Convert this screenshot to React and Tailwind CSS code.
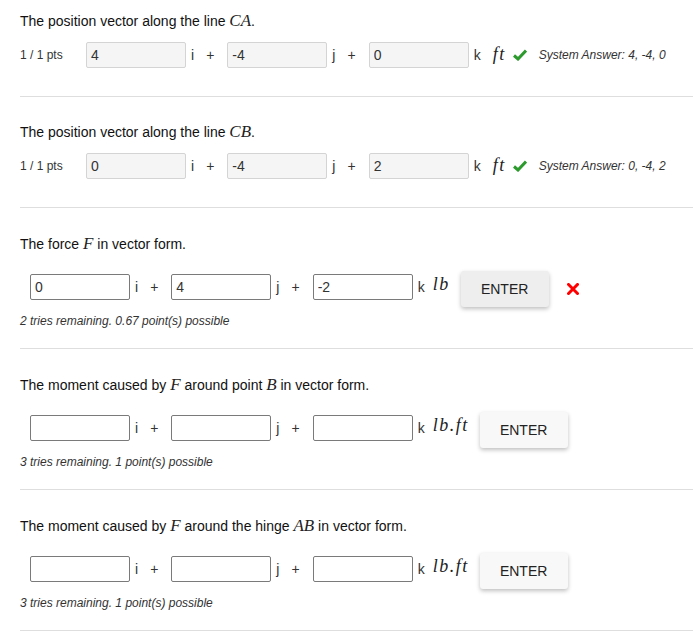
import React from 'react';

const mathFont = { fontFamily: '"Liberation Serif", "DejaVu Serif", serif' };

function M({ children, size }) {
  return (
    <span className={`italic ${size || 'text-[17px]'} text-[#222] leading-none`} style={mathFont}>
      {children}
    </span>
  );
}

function Check() {
  return (
    <svg width="14" height="12" viewBox="0 0 14 12" className="ml-[7px] shrink-0">
      <path d="M1 6.5 L5 10 L13 1.5" fill="none" stroke="#2c9a2c" strokeWidth="3" strokeLinejoin="miter" />
    </svg>
  );
}

function Cross() {
  return (
    <svg width="12" height="12" viewBox="0 0 12 12" className="ml-[18px] mt-[12px] shrink-0">
      <path d="M1.5 1.5 L10.5 10.5 M10.5 1.5 L1.5 10.5" stroke="#ff0000" strokeWidth="3" strokeLinecap="square" />
    </svg>
  );
}

function Box({ value, done }) {
  return (
    <input
      type="text"
      readOnly
      value={value}
      className={
        done
          ? 'w-[100px] h-[26px] px-[4px] text-[14px] text-[#333] bg-[#f5f5f5] border border-[#d4d4d4] rounded-[2px] outline-none'
          : 'w-[100px] h-[26px] px-[4px] text-[14px] text-[#333] bg-white border border-[#7a7a7a] rounded-[2px] outline-none'
      }
    />
  );
}

function Vector({ values, done }) {
  return (
    <>
      <Box value={values[0]} done={done} />
      <span className="ml-[5px]">i</span>
      <span className="ml-[12px]">+</span>
      <span className="ml-[13px]"><Box value={values[1]} done={done} /></span>
      <span className="ml-[5px]">j</span>
      <span className="ml-[12px]">+</span>
      <span className="ml-[13px]"><Box value={values[2]} done={done} /></span>
      <span className="ml-[5px]">k</span>
    </>
  );
}

function Answered({ title, values, answer, first }) {
  return (
    <div className={`border-b border-[#dedede] pb-[28px] ${first ? 'pt-[11px]' : 'pt-[25px]'}`}>
      <p className="text-[14px] leading-[20px] text-[#111]">{title}</p>
      <div className="flex items-center mt-[11px] text-[14px] text-[#333]">
        <span className="w-[66px] text-[12px]">1 / 1 pts</span>
        <Vector values={values} done />
        <span className="ml-[12px] tracking-[1.5px]"><M size="text-[18px]">ft</M></span>
        <Check />
        <span className="ml-[12px] text-[12px] italic text-[#333]">System Answer: {answer}</span>
      </div>
    </div>
  );
}

function Open({ title, values, unit, tries, wrong, pressed }) {
  return (
    <div className="border-b border-[#dedede] pt-[26px] pb-[20px]">
      <p className="text-[14px] leading-[20px] text-[#111]">{title}</p>
      <div className="flex items-start mt-[17px] pl-[10px] text-[14px] text-[#333]">
        <div className="flex items-center h-[26px] mt-[3px]">
          <Vector values={values} />
          <span className="ml-[8px] -mt-[4px] tracking-[1.5px]"><M size="text-[18px]">{unit}</M></span>
        </div>
        <button
          className={`ml-[11px] w-[88px] h-[36px] rounded-[3px] text-[14px] text-[#222] shadow-[0_2px_4px_rgba(0,0,0,0.25)] ${pressed ? 'bg-[#eeeeee]' : 'bg-[#f8f8f8]'}`}
        >
          ENTER
        </button>
        {wrong && <Cross />}
      </div>
      <p className="mt-[7px] text-[12px] leading-[14px] italic text-[#333]">{tries}</p>
    </div>
  );
}

export default function App() {
  return (
    <div className="bg-white min-h-screen pl-[20px]" style={{ fontFamily: '"Liberation Sans", Arial, sans-serif' }}>
      <Answered
        first
        title={<>The position vector along the line <M>CA</M>.</>}
        values={['4', '-4', '0']}
        answer="4, -4, 0"
      />
      <Answered
        title={<>The position vector along the line <M>CB</M>.</>}
        values={['0', '-4', '2']}
        answer="0, -4, 2"
      />
      <Open
        title={<>The force <M>F</M> in vector form.</>}
        values={['0', '4', '-2']}
        unit="lb"
        tries="2 tries remaining. 0.67 point(s) possible"
        wrong
        pressed
      />
      <Open
        title={<>The moment caused by <M>F</M> around point <M>B</M> in vector form.</>}
        values={['', '', '']}
        unit="lb.ft"
        tries="3 tries remaining. 1 point(s) possible"
      />
      <Open
        title={<>The moment caused by <M>F</M> around the hinge <M>AB</M> in vector form.</>}
        values={['', '', '']}
        unit="lb.ft"
        tries="3 tries remaining. 1 point(s) possible"
      />
    </div>
  );
}
